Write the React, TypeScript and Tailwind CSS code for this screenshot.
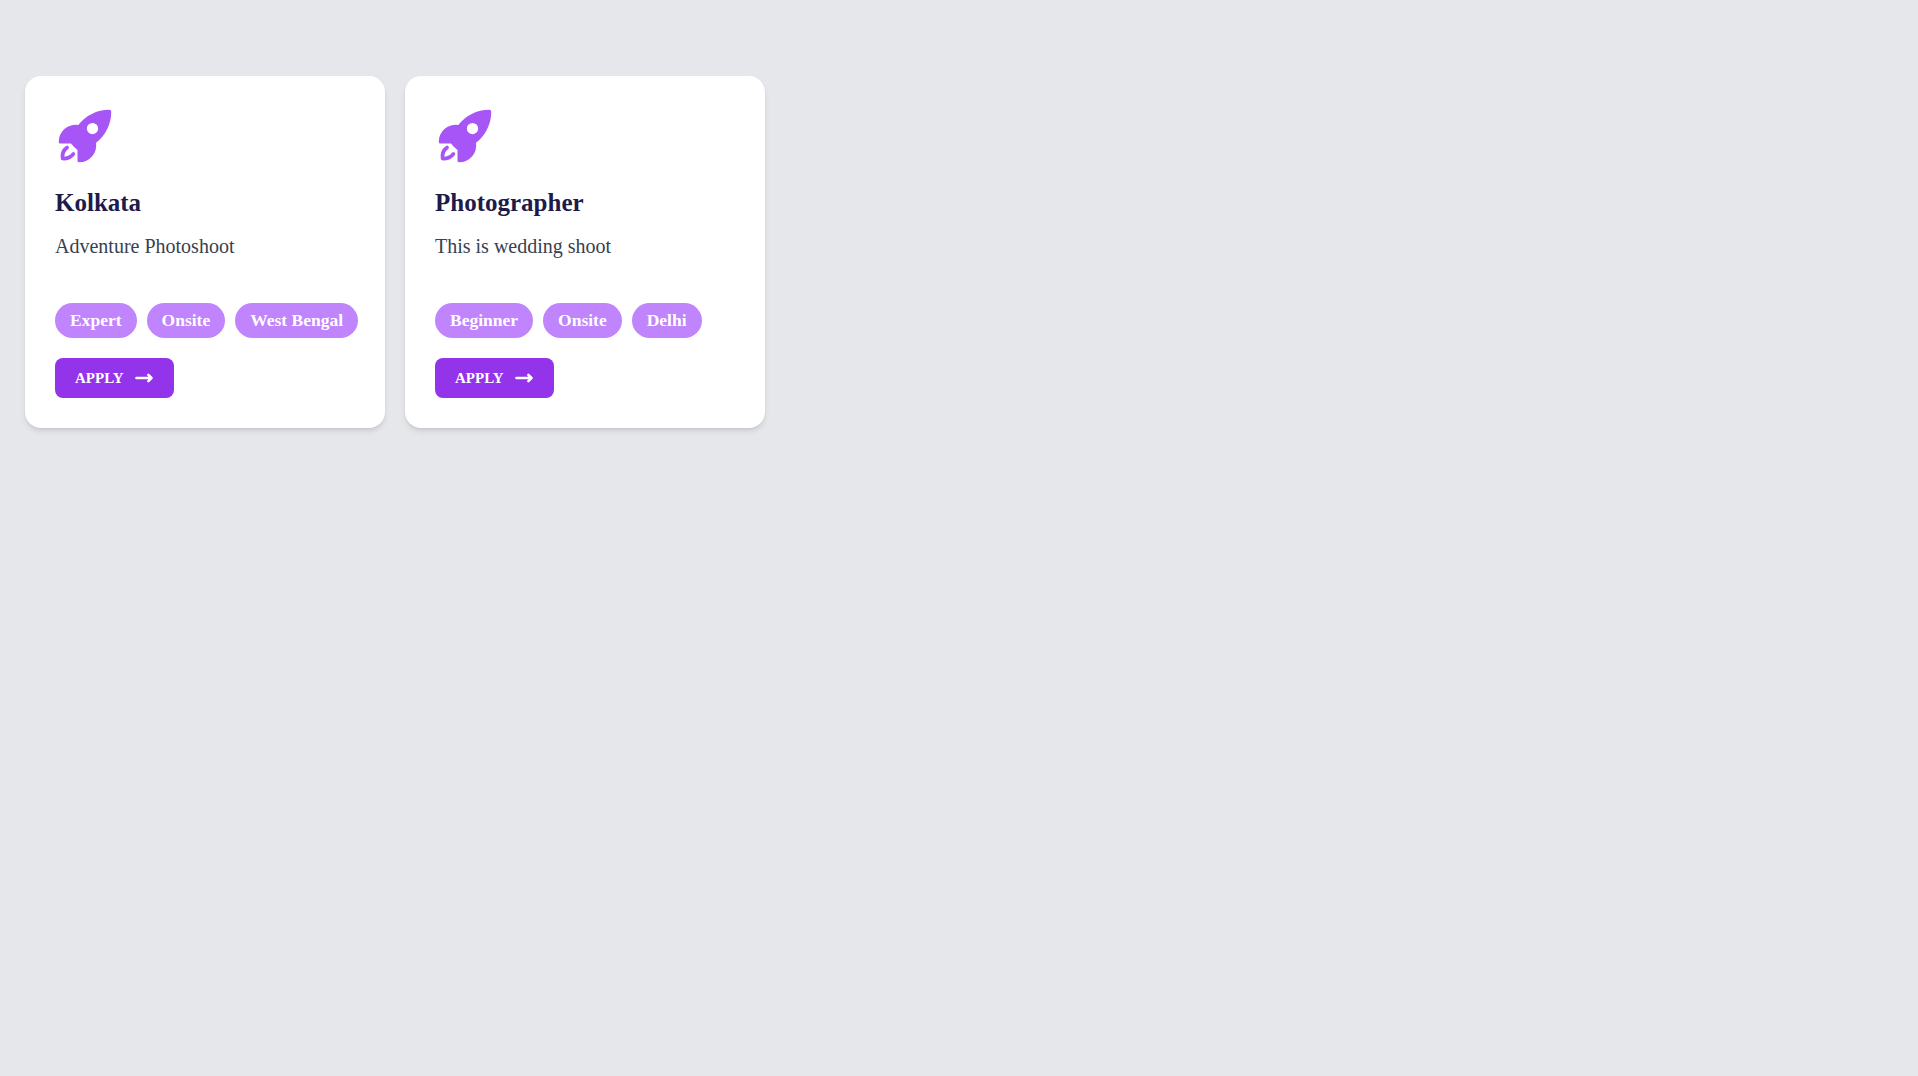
import React from 'react';
import { HiRocketLaunch, HiArrowLongRight } from 'react-icons/hi2';

const jobs = [
  { title: 'Kolkata', desc: 'Adventure Photoshoot', tags: ['Expert', 'Onsite', 'West Bengal'] },
  { title: 'Photographer', desc: 'This is wedding shoot', tags: ['Beginner', 'Onsite', 'Delhi'] },
];

const JobCard = ({ title, desc, tags }: { title: string; desc: string; tags: string[] }) => (
  <div className="w-[360px] h-[352px] bg-white rounded-2xl shadow-md p-[30px] flex flex-col items-start">
    <HiRocketLaunch className="w-[60px] h-[60px] text-[#a855f7]" />
    <h2 className="mt-[21px] text-[25px] leading-8 font-bold text-[#1e1b4b]">{title}</h2>
    <p className="mt-[13px] text-xl leading-7 text-[#374151]">{desc}</p>
    <div className="mt-[43px] flex gap-[10px]">
      {tags.map((tag) => (
        <span key={tag} className="h-[35px] px-[15px] rounded-full bg-[#c084fc] text-white text-[17.5px] font-bold leading-[35px] whitespace-nowrap">
          {tag}
        </span>
      ))}
    </div>
    <button className="mt-5 h-10 w-[119px] px-5 rounded-lg bg-[#9333ea] text-white text-[15px] font-bold uppercase flex items-center gap-[10px]">
      Apply
      <HiArrowLongRight className="w-5 h-5" strokeWidth={1.6} />
    </button>
  </div>
);

export default function App() {
  return (
    <div className="min-h-screen bg-[#e5e7eb] font-['Liberation_Serif',serif] pt-[76px] pl-[25px] flex items-start gap-5">
      {jobs.map((job) => (
        <JobCard key={job.title} {...job} />
      ))}
    </div>
  );
}
